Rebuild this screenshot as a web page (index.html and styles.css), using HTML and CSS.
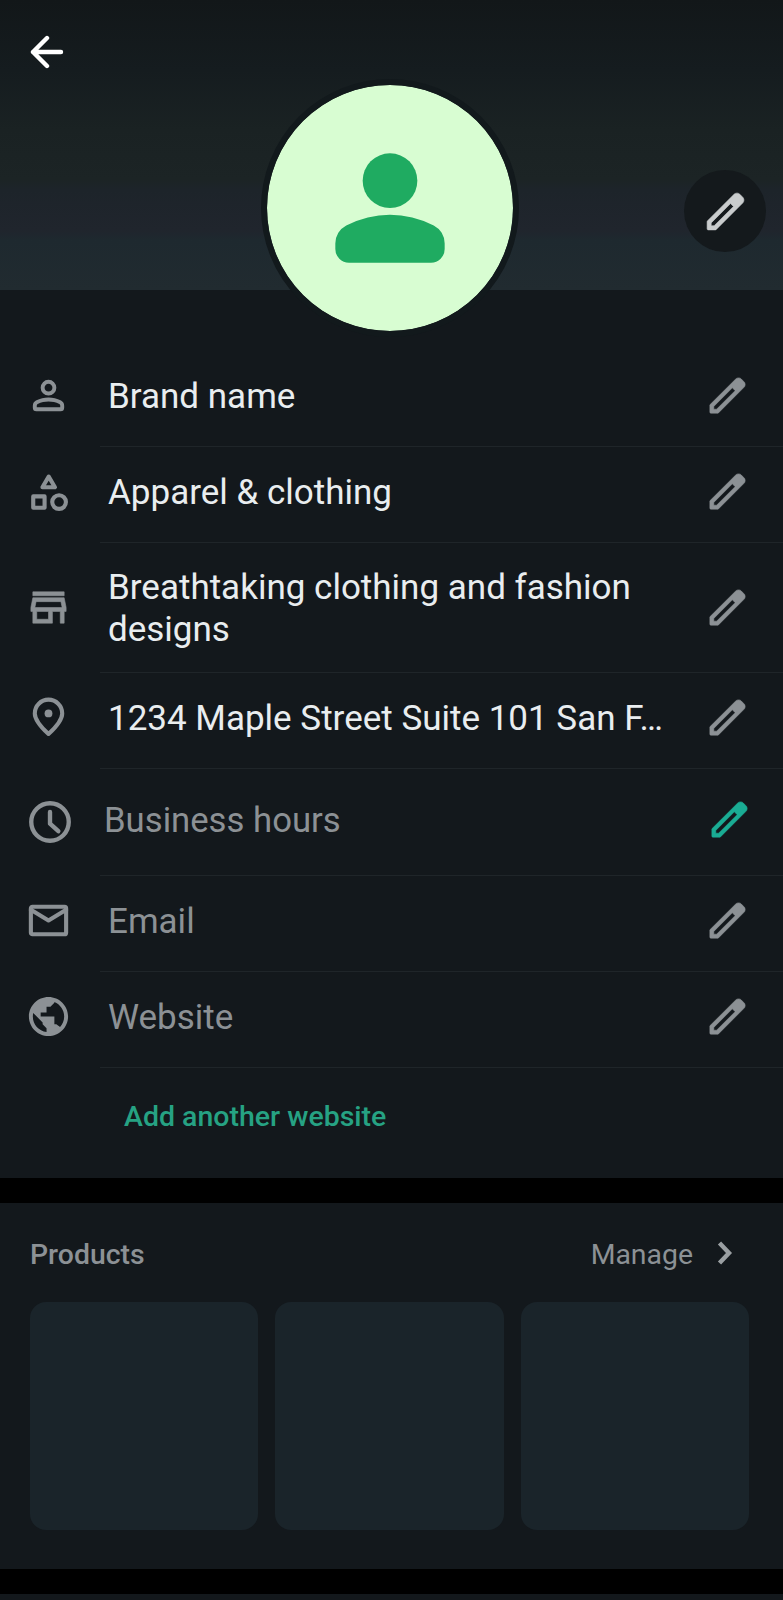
FILE: index.html
```html
<!DOCTYPE html>
<html lang="en">
<head>
  <meta charset="UTF-8">
  <title>Business profile</title>
  <meta name="viewport" content="width=device-width, initial-scale=1.0">
  <link rel="stylesheet" href="styles.css">
</head>
<body>
  <svg class="sprite" width="0" height="0">
    <symbol id="pencil" viewBox="0 0 24 24">
      <path fill-rule="evenodd" d="M3.500 21Q3 21 3 20.500v-3.750L16.200 3.575q.3-.275.663-.425t.762-.15q.4 0 .775.15t.65.45L20.425 5q.3.275.437.65T21 6.400q0 .4-.137.763t-.438.662L7.250 21H3.500zM5 19h1.425L15.900 9.525 14.475 8.100 5 17.575V19z"/>
    </symbol>
  </svg>

  <header class="cover">
    <button class="back" aria-label="Back">
      <svg viewBox="0 0 34 34"><path d="M31 17H3M17 3L3 17l14 14"/></svg>
    </button>
    <div class="avatar">
      <svg viewBox="0 0 24 24">
        <circle cx="12" cy="8" r="4"/>
        <path d="M4 18v-.8q0-.85.438-1.563T5.600 14.550q1.550-.775 3.150-1.163T12 13q1.650 0 3.250.388t3.150 1.162q.725.375 1.163 1.088T20 17.200v.8a2 2 0 0 1-2 2H6a2 2 0 0 1-2-2z"/>
      </svg>
    </div>
    <button class="edit-cover" aria-label="Edit cover"><svg><use href="#pencil"/></svg></button>
  </header>

  <main class="details">
    <div class="row">
      <svg class="icon" viewBox="0 0 24 24">
        <path fill-rule="evenodd" d="M12 12q-1.650 0-2.825-1.175T8 8q0-1.650 1.175-2.825T12 4q1.650 0 2.825 1.175T16 8q0 1.650-1.175 2.825T12 12zM4 18.200v-1q0-.85.438-1.563T5.600 14.550q1.550-.775 3.150-1.163T12 13q1.650 0 3.250.388t3.150 1.162q.725.375 1.163 1.088T20 17.200v1q0 1.800-1.800 1.800H5.800Q4 20 4 18.200zM6 18h12v-.8q0-.275-.137-.5t-.363-.35q-1.350-.675-2.725-1.012T12 15q-1.400 0-2.775.338T6.500 16.350q-.225.125-.363.35T6 17.200v.8zm6-8q.825 0 1.413-.588T14 8q0-.825-.588-1.413T12 6q-.825 0-1.413.588T10 8q0 .825.588 1.413T12 10z"/>
      </svg>
      <div class="field"><span class="label">Brand name</span><svg class="edit"><use href="#pencil"/></svg></div>
    </div>

    <div class="row">
      <svg class="icon line" viewBox="0 0 24 24">
        <path d="M12.100 4.400l3.200 5.400H8.900zM4.200 14.500H10v5.800H4.200z"/>
        <circle cx="17.400" cy="17.400" r="3.500"/>
      </svg>
      <div class="field"><span class="label">Apparel &amp; clothing</span><svg class="edit"><use href="#pencil"/></svg></div>
    </div>

    <div class="row tall">
      <svg class="icon store" viewBox="0 0 24 24">
        <path fill-rule="evenodd" d="M4 6V4h16v2H4zm0 14v-6H3v-2l1-5h16l1 5v2h-1v6h-2v-6h-4v6H4zm2-2h6v-4H6v4zm-.95-6h13.900l-.6-3H5.650z"/>
      </svg>
      <div class="field"><span class="label wrap">Breathtaking clothing and fashion designs</span><svg class="edit"><use href="#pencil"/></svg></div>
    </div>

    <div class="row">
      <svg class="icon line" viewBox="0 0 24 24">
        <path d="M12 20.400C7 15.800 5 12.900 5 9.900a7 7 0 0 1 14 0c0 3-2 5.900-7 10.500z"/>
        <circle class="dot" cx="12" cy="9.900" r="2"/>
      </svg>
      <div class="field"><span class="label">1234 Maple Street Suite 101 San F…</span><svg class="edit"><use href="#pencil"/></svg></div>
    </div>

    <div class="row hours empty">
      <svg class="icon line" viewBox="0 0 24 24">
        <circle cx="12" cy="12" r="9"/>
        <path d="M12 7.200V12.800l4 3.600"/>
      </svg>
      <div class="field"><span class="label">Business hours</span><svg class="edit"><use href="#pencil"/></svg></div>
    </div>

    <div class="row empty">
      <svg class="icon line" viewBox="0 0 24 24">
        <rect x="3" y="5" width="18" height="14" rx=".8"/>
        <path d="M3 6.500l9 5.500 9-5.500"/>
      </svg>
      <div class="field"><span class="label">Email</span><svg class="edit"><use href="#pencil"/></svg></div>
    </div>

    <div class="row empty">
      <svg class="icon" viewBox="0 0 24 24">
        <path d="M12 2C6.480 2 2 6.480 2 12s4.480 10 10 10 10-4.480 10-10S17.520 2 12 2zm-1 17.930c-3.950-.49-7-3.850-7-7.930 0-.62.08-1.210.21-1.790L9 15v1l2 2v1.930zm6.900-2.540L16 16h-1v-4H8v-2h3V7h2l2-2v-.41c2.930 1.190 5 4.060 5 7.410 0 2.080-.8 3.970-2.100 5.390z"/>
      </svg>
      <div class="field"><span class="label">Website</span><svg class="edit"><use href="#pencil"/></svg></div>
    </div>

    <a class="add">Add another website</a>
  </main>

  <section class="products">
    <div class="products-head">
      <h2>Products</h2>
      <a class="manage">Manage <svg viewBox="0 0 16 26"><path d="M2.500 3l9.500 10-9.500 10"/></svg></a>
    </div>
    <div class="cards">
      <div class="card"></div>
      <div class="card"></div>
      <div class="card"></div>
    </div>
  </section>
</body>
</html>
```

FILE: styles.css
```css
* {
  margin: 0;
  padding: 0;
  box-sizing: border-box;
}

body {
  font-family: Roboto, "Liberation Sans", sans-serif;
  background-color: #13181c;
  color: #e9edef;
  height: 1600px;
  overflow: hidden;
}

button {
  border: none;
  background: none;
}

svg {
  display: block;
  flex-shrink: 0;
}

.sprite {
  position: absolute;
}

.cover {
  position: relative;
  height: 290px;
  background: linear-gradient(#121719 0, #151c1f 70px, #1a2223 130px, #1c2425 180px, #1d242a 190px, #20252d 230px, #1e292f 240px, #212b30 290px);
}

.back {
  position: absolute;
  left: 30px;
  top: 35px;
}

.back svg {
  width: 34px;
  height: 34px;
  fill: none;
  stroke: #fff;
  stroke-width: 4.4;
  stroke-linecap: round;
  stroke-linejoin: round;
}

.avatar {
  position: absolute;
  left: 261px;
  top: 79px;
  width: 258px;
  height: 258px;
  border: 6px solid #12191c;
  border-radius: 50%;
  background-color: #d8fdd2;
  background-clip: padding-box;
  display: flex;
  align-items: center;
  justify-content: center;
}

.avatar svg {
  width: 164px;
  height: 164px;
  fill: #1fab61;
}

.edit-cover {
  position: absolute;
  left: 684px;
  top: 170px;
  width: 82px;
  height: 82px;
  border-radius: 50%;
  background-color: #14191c;
  display: flex;
  align-items: center;
  justify-content: center;
}

.edit-cover svg {
  width: 49px;
  height: 49px;
  fill: #c9cccd;
  stroke: #c9cccd;
  stroke-width: .3;
}

.details {
  height: 888px;
  padding-top: 61px;
}

.row {
  display: flex;
  height: 96px;
  padding-left: 25px;
}

.row .icon {
  width: 47px;
  height: 47px;
  margin-top: 21px;
  margin-right: 28px;
  fill: #8c9195;
}

.row .line {
  fill: none;
  stroke: #8c9195;
  stroke-width: 2.1;
  stroke-linejoin: round;
  stroke-linecap: round;
}

.row .store {
  stroke: #8c9195;
  stroke-width: .3;
  stroke-linejoin: round;
}

.row .line .dot {
  fill: #8c9195;
  stroke: none;
}

.field {
  flex: 1;
  display: flex;
  align-items: center;
  padding: 0 32px 6px 8px;
  border-bottom: 1px solid #1f2529;
}

.label {
  flex: 1;
  padding-top: 3px;
  font-size: 35px;
  line-height: 42px;
  white-space: nowrap;
}

.label.wrap {
  white-space: normal;
  padding-right: 60px;
}

.edit {
  width: 47px;
  height: 47px;
  fill: #8c9195;
  stroke: #8c9195;
  stroke-width: .3;
}

.tall {
  height: 130px;
}

.tall .icon {
  margin-top: 41px;
}

.tall .field {
  padding-bottom: 0;
}

.empty .label {
  color: #8c9195;
}

.hours {
  height: 107px;
}

.hours .icon {
  width: 50px;
  height: 50px;
  margin-top: 28px;
  margin-right: 25px;
}

.hours .field {
  padding: 0 30px 5px 4px;
}

.hours .label {
  padding-top: 0;
  font-size: 34.7px;
}

.hours .edit {
  fill: #1aac94;
  stroke: #1aac94;
}

.add {
  display: block;
  margin: 32px 0 0 124px;
  font-size: 28.5px;
  font-weight: 500;
  line-height: 33px;
  color: #26a283;
}

.products {
  height: 416px;
  padding: 34px 34px 0 30px;
  border-top: 25px solid #000;
  border-bottom: 25px solid #000;
}

.products-head {
  display: flex;
  align-items: center;
  justify-content: space-between;
  height: 34px;
  font-size: 28.4px;
  color: #8c9195;
}

.products-head h2 {
  font-size: 28.4px;
  font-weight: 500;
}

.manage {
  display: flex;
  align-items: center;
  gap: 24px;
  padding-right: 16px;
}

.manage svg {
  width: 16px;
  height: 26px;
  margin-bottom: 3px;
  fill: none;
  stroke: #9a9fa2;
  stroke-width: 4.4;
}

.cards {
  display: grid;
  grid-template-columns: repeat(3, 1fr);
  gap: 17px;
  margin-top: 31px;
}

.card {
  height: 228px;
  border-radius: 16px;
  background-color: #1a242a;
}
```
